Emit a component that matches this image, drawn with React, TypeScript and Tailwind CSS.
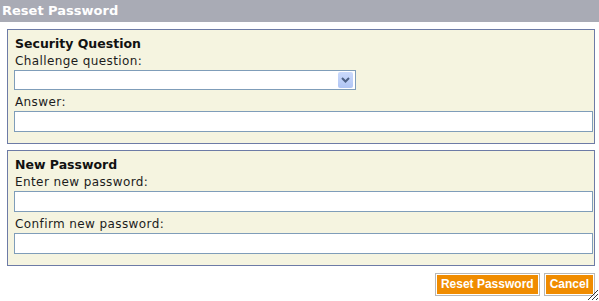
import React from 'react';

const font = { fontFamily: '"DejaVu Sans", Verdana, sans-serif' };

const Label = ({ children }: { children: React.ReactNode }) => (
  <label className="block pl-[1px] text-[12px] leading-[15px] tracking-[0.4px] text-[#1c1c1c]">{children}</label>
);

const Field = ({ label }: { label: string }) => (
  <div className="flex flex-col">
    <Label>{label}</Label>
    <input className="mt-[1px] h-[21px] w-full border border-[#7f9db9] bg-white outline-none" />
  </div>
);

const Section = ({ title, children }: { title: string; children: React.ReactNode }) => (
  <div className="ml-[7px] mr-[4px] border border-[#6d7ba6] bg-[#f5f4e0] pl-[6px] pr-[1px] pt-[6px] pb-[11px]">
    <div className="pl-[1px] text-[12.5px] font-bold leading-[15px] text-[#111]">{title}</div>
    <div className="mt-[3px] flex flex-col gap-[5px]">{children}</div>
  </div>
);

const App = () => {
  return (
    <div className="relative h-[301px] w-[599px] overflow-hidden bg-white" style={font}>
      <div className="h-[22px] bg-[#a9abb5] pl-[2px] text-[13px] font-bold leading-[21px] text-white">
        Reset Password
      </div>
      <div className="mt-[7px] flex flex-col gap-[6px]">
        <Section title="Security Question">
          <div className="flex flex-col">
            <Label>Challenge question:</Label>
            <div className="mt-[1px] flex h-[20px] w-[342px] items-center justify-end border border-[#7f9db9] bg-white pr-[2px]">
              <div className="flex h-[16px] w-[15px] items-center justify-center rounded-[2px] bg-gradient-to-b from-[#cbdafc] to-[#b0c5f4]">
                <svg width="9" height="6" viewBox="0 0 9 6">
                  <path d="M1 1 L4.5 4.5 L8 1" stroke="#4d6185" strokeWidth="2" fill="none" />
                </svg>
              </div>
            </div>
          </div>
          <Field label="Answer:" />
        </Section>
        <Section title="New Password">
          <Field label="Enter new password:" />
          <Field label="Confirm new password:" />
        </Section>
      </div>
      <div
        className="mt-[7px] flex justify-end gap-[4px] pr-[4px]"
        style={{ fontFamily: '"Liberation Sans", Arial, sans-serif' }}
      >
        <button className="border border-[#b8b8b8] bg-white p-[1px]">
          <span className="block h-[19px] bg-[#f08c00] px-[4px] text-[12px] font-bold leading-[19px] text-white">
            Reset Password
          </span>
        </button>
        <button className="border border-[#b8b8b8] bg-white p-[1px]">
          <span className="block h-[19px] bg-[#f08c00] px-[4px] text-[12px] font-bold leading-[19px] text-white">
            Cancel
          </span>
        </button>
      </div>
      <svg className="absolute right-0 bottom-0" width="14" height="14" viewBox="0 0 14 14">
        <path d="M13 3 L3 13 M13 7 L7 13 M13 11 L11 13" stroke="#333" strokeWidth="1" />
        <path d="M13.5 4 L4 13.5 M13.5 8 L8 13.5" stroke="#fff" strokeWidth="1" />
      </svg>
    </div>
  );
};

export default App;
